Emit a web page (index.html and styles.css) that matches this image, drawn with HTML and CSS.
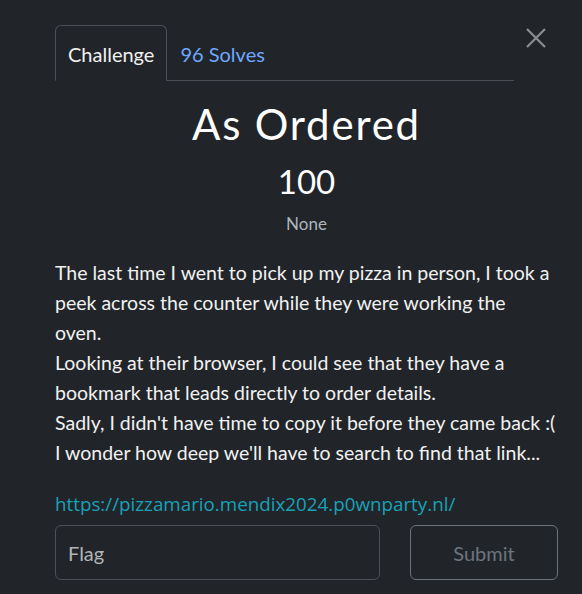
FILE: index.html
```html
<!DOCTYPE html>
<html lang="en">
<head>
    <meta charset="UTF-8">
    <title>As Ordered</title>
    <link rel="stylesheet" href="styles.css">
</head>
<body>
    <div class="modal">
        <div class="modal-top">
            <ul class="tabs">
                <li class="tab active">Challenge</li>
                <li class="tab">96 Solves</li>
            </ul>
            <button class="close" aria-label="Close">
                <svg width="22" height="22" viewBox="0 0 22 22">
                    <path d="M2 2 L20 20 M20 2 L2 20" stroke="#8a8d91" stroke-width="2.2" fill="none"/>
                </svg>
            </button>
        </div>

        <div class="challenge">
            <h2 class="name">As Ordered</h2>
            <h3 class="value">100</h3>
            <div class="tags">None</div>

            <div class="description">
                <p>The last time I went to pick up my pizza in person, I took a peek across the counter while they were working the<br>
                oven.<br>
                Looking at their browser, I could see that they have a bookmark that leads directly to order details.<br>
                Sadly, I didn't have time to copy it before they came back :(<br>
                I wonder how deep we'll have to search to find that link...</p>
                <p class="link"><a href="#">https://pizzamario.mendix2024.p0wnparty.nl/</a></p>
            </div>

            <div class="submit-row">
                <input class="flag" type="text" placeholder="Flag">
                <button class="submit">Submit</button>
            </div>
        </div>
    </div>
</body>
</html>
```

FILE: styles.css
```css
body {
    margin: 0;
    background-color: #212529;
    color: #fff;
    font-family: Lato, "Open Sans", sans-serif;
}
.modal {
    padding: 25px 24px 0 55px;
}
.modal-top {
    display: flex;
    align-items: flex-start;
}
.tabs {
    display: flex;
    list-style: none;
    margin: 0;
    padding: 0;
    width: 459px;
    border-bottom: 1px solid #4b5057;
}
.tab {
    padding: 0 12px;
    height: 54px;
    line-height: 56px;
    font-size: 20px;
    color: #6ea8fe;
    border: 1px solid transparent;
    margin-bottom: -1px;
}
.tab.active {
    color: #f1f1f1;
    background-color: #212529;
    border-color: #4b5057 #4b5057 #212529;
    border-radius: 6px 6px 0 0;
}
.close {
    background: none;
    border: 0;
    padding: 0;
    margin: 2px 0 0 11px;
    cursor: pointer;
}
.challenge {
    width: 503px;
}
.name {
    margin: 19px 0 0;
    text-align: center;
    font-size: 42px;
    font-weight: 400;
    letter-spacing: 1.8px;
    line-height: 48px;
}
.value {
    margin: 14px 0 0;
    text-align: center;
    font-size: 33px;
    font-weight: 400;
    line-height: 38px;
}
.tags {
    margin-top: 13px;
    text-align: center;
    font-size: 17px;
    color: #adb5bd;
}
.description {
    width: 503px;
    margin-top: 24px;
    font-size: 19.5px;
    line-height: 30px;
    color: #f1f1f1;
}
.description p {
    margin: 0 0 21px;
}
.description p.link {
    margin-bottom: 6px;
}
.description a {
    color: #17a2b8;
    text-decoration: none;
    font-family: "Open Sans", sans-serif;
    font-size: 18.8px;
}
.submit-row {
    display: flex;
    justify-content: space-between;
}
.flag, .submit {
    height: 55px;
    box-sizing: border-box;
    border-radius: 6px;
    background: transparent;
    font-family: Lato, sans-serif;
    font-size: 20px;
}
.flag {
    width: 325px;
    border: 1px solid #4b5057;
    padding: 0 12px;
    color: #fff;
}
.flag::placeholder {
    color: #b0b4b8;
}
.submit {
    width: 148px;
    border: 1px solid #6c757d;
    color: #6c757d;
}
```
